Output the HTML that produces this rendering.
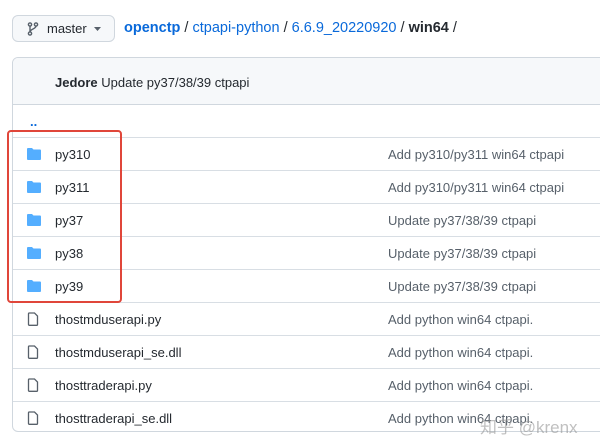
<!DOCTYPE html><html><head><style>
body{margin:0;width:600px;height:447px;background:#fff;font-family:"Liberation Sans",sans-serif;color:#24292f;position:relative;overflow:hidden;font-size:13px}
.btn{position:absolute;left:12px;top:15px;width:103px;height:27px;border:1px solid #d0d7de;border-radius:6px;background:#f6f8fa;box-sizing:border-box}
.crumb{position:absolute;left:124px;top:20px;font-size:14.5px}
.crumb a{color:#0969da}
.box{position:absolute;left:12px;top:57px;width:620px;height:375px;border:1px solid #d0d7de;border-radius:6px;box-sizing:border-box;overflow:hidden}
.hd{height:47px;background:#f6f8fa;border-bottom:1px solid #d0d7de;box-sizing:border-box;padding:17px 0 0 42px}
.row{position:absolute;left:0;width:100%;height:33px;border-top:1px solid #d8dee4;box-sizing:border-box}
.row .n{position:absolute;left:42px;top:9px}
.row .m{position:absolute;left:375px;top:9px;color:#57606a}
.row svg{position:absolute;left:14px;top:9px}
.red{position:absolute;left:7px;top:130px;width:115px;height:173px;border:2px solid #e0463a;border-radius:4px;box-sizing:border-box}
.wm{position:absolute;left:480px;top:413px;color:rgba(150,150,150,.6);font-size:17px;font-family:"Liberation Sans","Noto Sans CJK SC",sans-serif}
</style></head><body>
<div class="btn"><svg style="position:absolute;left:14px;top:6px" width="12" height="14" viewBox="0 0 12 14" fill="none" stroke="#57606a" stroke-width="1.4"><circle cx="3" cy="2.5" r="1.6"/><circle cx="9" cy="2.5" r="1.6"/><circle cx="3" cy="11.5" r="1.6"/><path d="M3 4v6M9 4c0 3-6 3-6 6"/></svg><span style="position:absolute;left:34px;top:5px;font-size:13px">master</span><svg style="position:absolute;left:81px;top:11px" width="7" height="4" viewBox="0 0 7 4"><path d="M0 0h7L3.5 4z" fill="#57606a"/></svg></div>
<div class="crumb"><a style="font-weight:bold">openctp</a> / <a>ctpapi-python</a> / <a>6.6.9_20220920</a> / <b>win64</b> /</div>
<div class="box">
<div class="hd"><b>Jedore</b> Update py37/38/39 ctpapi</div>
<div style="position:absolute;left:17px;top:56px;color:#0969da;font-weight:bold">..</div>
<div id="rows"></div>
</div>
<div class="red"></div>
<div class="wm">知乎 @krenx</div>
<script>
var d=[["py310","Add py310/py311 win64 ctpapi",1],["py311","Add py310/py311 win64 ctpapi",1],["py37","Update py37/38/39 ctpapi",1],["py38","Update py37/38/39 ctpapi",1],["py39","Update py37/38/39 ctpapi",1],["thostmduserapi.py","Add python win64 ctpapi.",0],["thostmduserapi_se.dll","Add python win64 ctpapi.",0],["thosttraderapi.py","Add python win64 ctpapi.",0],["thosttraderapi_se.dll","Add python win64 ctpapi.",0]];
var h="";d.forEach(function(r,i){var ic=r[2]?'<svg width="14" height="13" viewBox="0 0 14 13"><path d="M0 2a1 1 0 0 1 1-1h4l1.5 1.5H13a1 1 0 0 1 1 1V12a1 1 0 0 1-1 1H1a1 1 0 0 1-1-1z" fill="#54aeff"/></svg>':'<svg width="12" height="14" viewBox="0 0 12 14" fill="none" stroke="#57606a" stroke-width="1.3"><path d="M1.5 1h6l3 3v8.5a.8.8 0 0 1-.8.8H2.3a.8.8 0 0 1-.8-.8V1.8a.8.8 0 0 1 .8-.8z"/></svg>';
h+='<div class="row" style="top:'+(79+i*33)+'px">'+ic+'<span class="n">'+r[0]+'</span><span class="m">'+r[1]+'</span></div>';});
document.getElementById("rows").innerHTML=h;
</script>
</body></html>
